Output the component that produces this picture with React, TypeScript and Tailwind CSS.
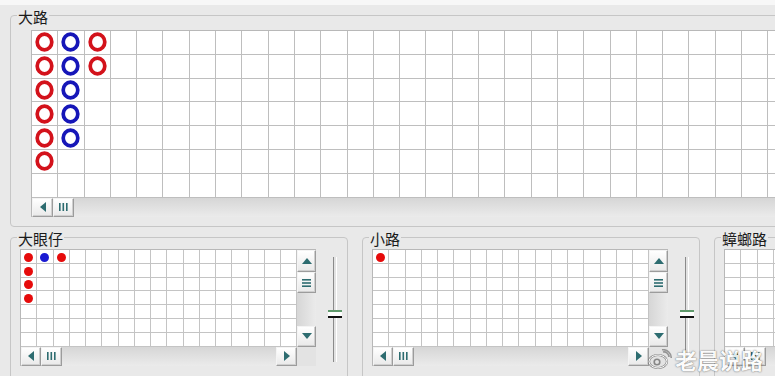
import type { ReactNode } from 'react';

type Mark = 'R' | 'B';

// roads are listed column by column, top to bottom
const bigRoad: Mark[][] = [
  ['R', 'R', 'R', 'R', 'R', 'R'],
  ['B', 'B', 'B', 'B', 'B'],
  ['R', 'R'],
];
const bigEyeRoad: Mark[][] = [['R', 'R', 'R', 'R'], ['B'], ['R']];
const smallRoad: Mark[][] = [['R']];
const cockroachRoad: Mark[][] = [];

const Ring = ({ mark }: { mark: Mark }) => (
  <svg width="19" height="20" viewBox="0 0 19 20">
    <ellipse cx="9.5" cy="10" rx="7.3" ry="7.9" fill="none" stroke={mark === 'R' ? '#d3121b' : '#1616b8'} strokeWidth="3.7" />
  </svg>
);

const Dot = ({ mark }: { mark: Mark }) => (
  <span className={`mt-[2px] block h-[9px] w-[9px] rounded-full ${mark === 'R' ? 'bg-[#e60b0b]' : 'bg-[#1a1ad2]'}`} />
);

const Arrow = ({ dir }: { dir: 'left' | 'right' | 'up' | 'down' }) => {
  const pts = {
    left: '6,0 6,10 0,5',
    right: '0,0 0,10 6,5',
    up: '0,6 10,6 5,0',
    down: '0,0 10,0 5,6',
  }[dir];
  const horiz = dir === 'left' || dir === 'right';
  return (
    <svg width={horiz ? 6 : 10} height={horiz ? 10 : 6} viewBox={horiz ? '0 0 6 10' : '0 0 10 6'}>
      <polygon points={pts} fill="#2d6c70" />
    </svg>
  );
};

const GripV = () => (
  <svg width="9" height="8" viewBox="0 0 9 8">
    <rect x="0" y="0" width="1.6" height="8" fill="#2d6c70" />
    <rect x="3.5" y="0" width="1.6" height="8" fill="#2d6c70" />
    <rect x="7" y="0" width="1.6" height="8" fill="#2d6c70" />
  </svg>
);

const GripH = () => (
  <svg width="9" height="8" viewBox="0 0 9 8">
    <rect x="0" y="0" width="9" height="1.6" fill="#2d6c70" />
    <rect x="0" y="3.2" width="9" height="1.6" fill="#2d6c70" />
    <rect x="0" y="6.4" width="9" height="1.6" fill="#2d6c70" />
  </svg>
);

const Btn = ({ children, className }: { children: ReactNode; className: string }) => (
  <div className={`flex shrink-0 items-center justify-center border border-[#9c9c9c] border-l-[#f4f4f4] border-t-[#f4f4f4] bg-gradient-to-b from-white to-[#e9e9e9] shadow-[inset_-1px_-1px_0_#cfcfcf] ${className}`}>
    {children}
  </div>
);

const GroupBox = ({ title, className, children }: { title: string; className: string; children: ReactNode }) => (
  <div className={`relative shrink-0 rounded-[4px] border border-[#c6c6c6] ${className}`}>
    <span className="absolute left-[6px] -top-[8px] bg-[#e9e9e9] px-[1px] text-[15px] leading-[18px] text-[#1b1b1b]">{title}</span>
    {children}
  </div>
);

const BigRoadPanel = () => {
  const cols = 29;
  const rows = 7;
  return (
    <GroupBox title="大路" className="ml-[10px] mt-[10px] h-[212px] w-[790px] pl-[20px] pt-[14px]">
      <div className="flex w-[760px] flex-col overflow-hidden border-l border-t border-[#b8b8b8]">
        <div className="grid grid-cols-[repeat(29,26.3px)] grid-rows-[repeat(7,23.8px)] bg-white">
          {Array.from({ length: cols * rows }).map((_, i) => {
            const r = Math.floor(i / cols);
            const c = i % cols;
            const m = bigRoad[c]?.[r];
            return (
              <div key={i} className="flex items-center justify-center border-b border-r border-[#bebebe]">
                {m && <Ring mark={m} />}
              </div>
            );
          })}
        </div>
        <div className="flex h-[19px] items-stretch bg-gradient-to-b from-[#d6d6d6] to-[#ebebeb]">
          <Btn className="w-[21px]"><Arrow dir="left" /></Btn>
          <Btn className="w-[21px]"><GripV /></Btn>
        </div>
      </div>
    </GroupBox>
  );
};

const DerivedPanel = ({ title, data }: { title: string; data: Mark[][] }) => {
  const cols = 17;
  const rows = 7;
  return (
    <GroupBox title={title} className="h-[150px] w-[338px] pl-[9px] pt-[11px]">
      <div className="flex items-start">
        <div className="flex border-l border-t border-[#b8b8b8]">
          <div className="flex flex-col">
            <div className="grid grid-cols-[repeat(17,16.25px)] grid-rows-[repeat(7,13.8px)] bg-white">
              {Array.from({ length: cols * rows }).map((_, i) => {
                const r = Math.floor(i / cols);
                const c = i % cols;
                const m = data[c]?.[r];
                return (
                  <div key={i} className="flex items-center justify-center border-b border-r border-[#c4c4c4]">
                    {m && <Dot mark={m} />}
                  </div>
                );
              })}
            </div>
            <div className="flex h-[19px] items-stretch justify-between bg-gradient-to-b from-[#d6d6d6] to-[#ebebeb]">
              <div className="flex">
                <Btn className="w-[20px]"><Arrow dir="left" /></Btn>
                <Btn className="w-[21px]"><GripV /></Btn>
              </div>
              <Btn className="w-[21px]"><Arrow dir="right" /></Btn>
            </div>
          </div>
          <div className="flex w-[19px] flex-col">
            <div className="flex h-[96.6px] flex-col justify-between bg-gradient-to-r from-[#d6d6d6] to-[#ebebeb]">
              <div className="flex flex-col">
                <Btn className="h-[22px]"><Arrow dir="up" /></Btn>
                <Btn className="h-[21px]"><GripH /></Btn>
              </div>
              <Btn className="h-[21px]"><Arrow dir="down" /></Btn>
            </div>
            <div className="h-[19px] bg-[#e3e3e3]" />
          </div>
        </div>
        {/* zoom slider */}
        <div className="relative ml-[17px] mt-[8px] h-[105px] w-[4px] border-l border-r border-[#8a8a8a] border-r-white bg-[#e2e2e2]">
          <div className="absolute left-[-6px] top-[53px] h-[8px] w-[14px] border-b-2 border-t-2 border-b-[#111] border-t-[#5f9a6c] bg-white" />
        </div>
      </div>
    </GroupBox>
  );
};

const Watermark = () => (
  <div className="absolute left-[648px] top-[346px] flex items-center gap-[3px] opacity-85">
    <svg width="24" height="20" viewBox="0 0 24 20">
      <ellipse cx="10" cy="12.5" rx="9" ry="6.5" fill="none" stroke="#777" strokeWidth="2.2" />
      <ellipse cx="10" cy="12.5" rx="9" ry="6.5" fill="none" stroke="#fff" strokeWidth="1" />
      <circle cx="9" cy="13" r="2.8" fill="none" stroke="#777" strokeWidth="1.6" />
      <path d="M15 3 A5 5 0 0 1 21 8" fill="none" stroke="#888" strokeWidth="1.6" />
      <path d="M14 0.8 A8 8 0 0 1 23.2 9" fill="none" stroke="#888" strokeWidth="1.6" />
    </svg>
    <span className="text-[22px] leading-[26px] font-bold text-white [text-shadow:0_0_2px_rgba(0,0,0,0.45),0_0_1px_rgba(0,0,0,0.5)]">老晨说路</span>
  </div>
);

export default function App() {
  return (
    <div className="relative flex h-[376px] w-[775px] flex-col overflow-hidden bg-[#e9e9e9] font-['Noto_Sans_CJK_SC','Noto_Sans',sans-serif]">
      <div className="h-[5px] shrink-0 bg-[#f7f7f7]" />
      <BigRoadPanel />
      <div className="ml-[10px] mt-[10px] flex gap-[14px]">
        <DerivedPanel title="大眼仔" data={bigEyeRoad} />
        <DerivedPanel title="小路" data={smallRoad} />
        <DerivedPanel title="蟑螂路" data={cockroachRoad} />
      </div>
      <Watermark />
    </div>
  );
}
